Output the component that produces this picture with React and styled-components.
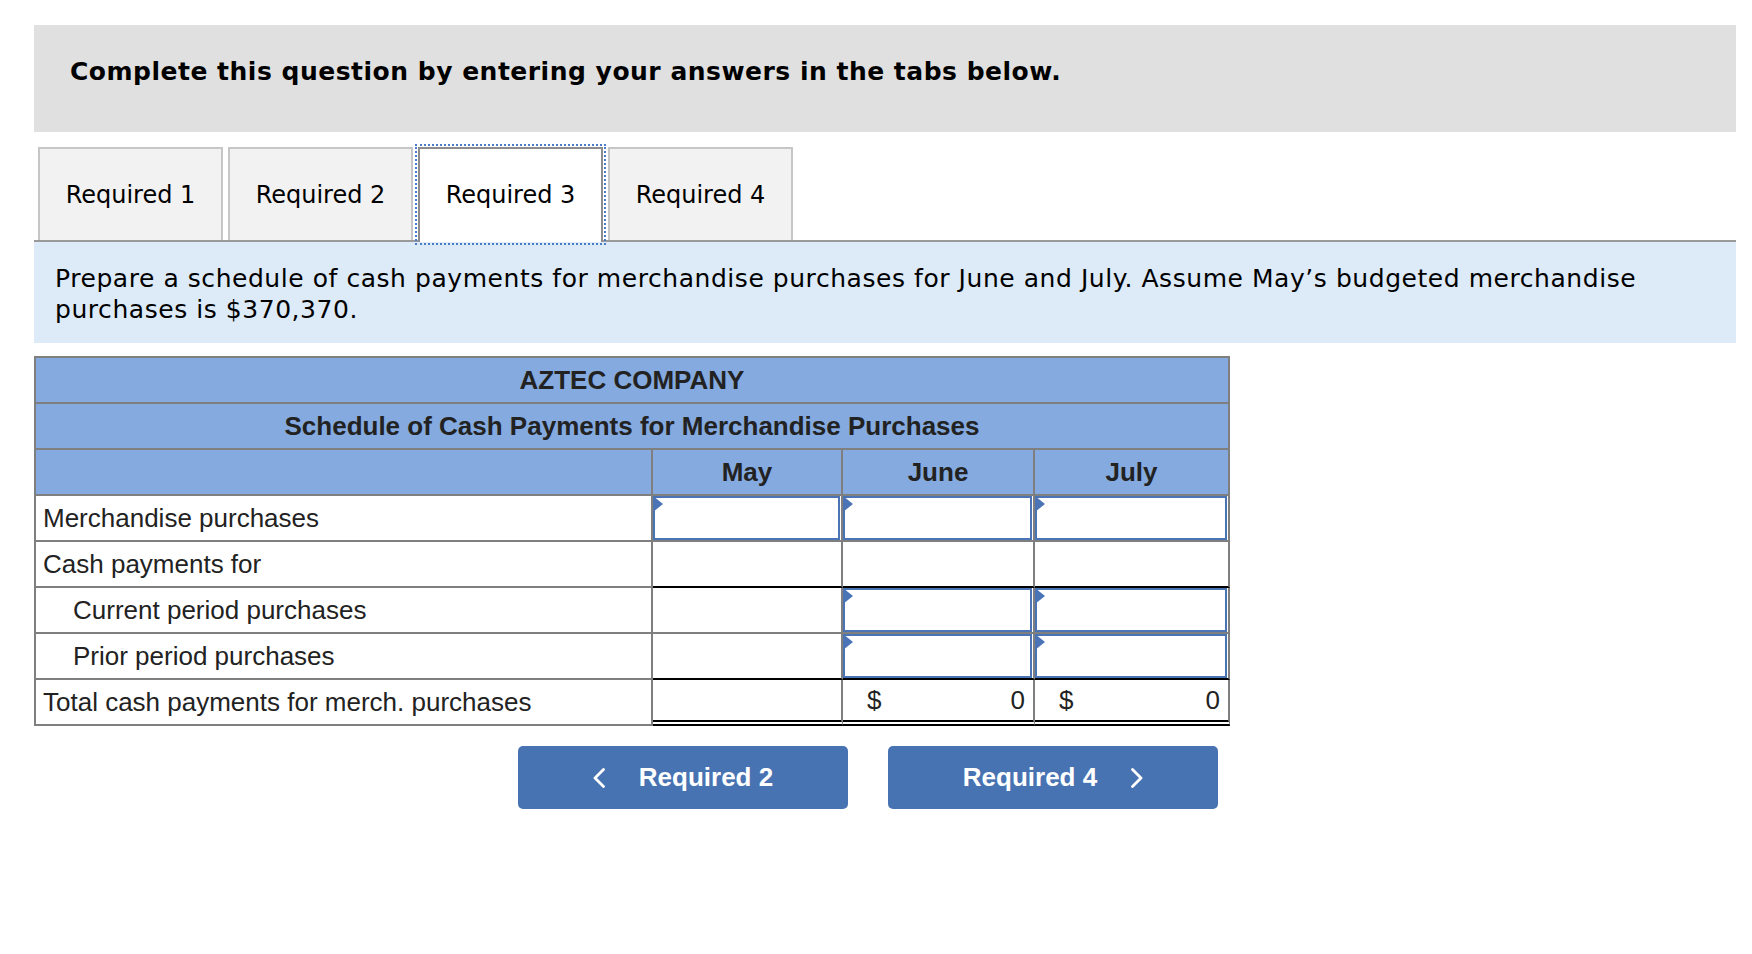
import React from 'react';
import styled, { createGlobalStyle, css } from 'styled-components';

const GlobalStyle = createGlobalStyle`
  html, body { margin: 0; padding: 0; background: #ffffff; }
  body { font-family: "DejaVu Sans", Verdana, sans-serif; color: #000; }
  * { box-sizing: border-box; }
`;

const Page = styled.div`
  width: 1752px;
  padding: 25px 16px 40px 34px;
`;

const Banner = styled.div`
  height: 107px;
  background: #e0e0e0;
  padding: 32px 36px 0;
`;

const BannerTitle = styled.h2`
  margin: 0;
  font-family: "DejaVu Sans", Verdana, sans-serif;
  font-weight: bold;
  font-size: 25px;
  letter-spacing: 0.5px;
  line-height: 29px;
  color: #000;
`;

const TabBar = styled.div`
  display: flex;
  gap: 5px;
  margin-top: 15px;
  padding-left: 4px;
  border-bottom: 2px solid #9a9a9a;
`;

const Tab = styled.div`
  width: 185px;
  height: 93px;
  display: flex;
  align-items: center;
  justify-content: center;
  font-size: 24px;
  color: #000;
  background: #f2f2f2;
  border: 2px solid #c6c6c6;
  border-bottom: none;
  ${(p) =>
    p.$active &&
    css`
      background: #ffffff;
      border-color: #8c8c8c;
      height: 95px;
      margin-bottom: -2px;
      padding-bottom: 2px;
      outline: 2px dotted #4a7cc9;
      outline-offset: 1px;
      position: relative;
      z-index: 1;
    `}
`;

const Prompt = styled.div`
  background: #ddeaf7;
  padding: 21px 21px 18px;
  font-size: 25px;
  letter-spacing: 0.55px;
  line-height: 31px;
  color: #000;
`;

const Sheet = styled.div`
  margin-top: 13px;
  width: 1196px;
  display: grid;
  grid-template-columns: 617px 190px 192px 195px;
  border-left: 2px solid #7f7f7f;
  border-top: 2px solid #7f7f7f;
  font-family: "Liberation Sans", Arial, sans-serif;
  font-size: 26px;
  color: #222;
`;

const Cell = styled.div`
  height: 46px;
  display: flex;
  align-items: center;
  border-right: 2px solid #7f7f7f;
  border-bottom: 2px solid #7f7f7f;
  background: #ffffff;
  padding: 0 0 0 ${(p) => (p.$indent ? 37 : 7)}px;
  ${(p) =>
    p.$head &&
    css`
      background: #84aadf;
      font-weight: bold;
      justify-content: center;
      padding: 0;
    `}
  ${(p) =>
    p.$span &&
    css`
      grid-column: 1 / -1;
    `}
  ${(p) =>
    p.$rule === 'single' &&
    css`
      border-bottom-color: #000;
    `}
  ${(p) =>
    p.$rule === 'double' &&
    css`
      border-bottom: 6px double #000;
    `}
  ${(p) =>
    p.$field &&
    css`
      padding: 0;
      align-items: stretch;
    `}
  ${(p) =>
    p.$money &&
    css`
      justify-content: space-between;
      padding: 0 8px 0 24px;
    `}
`;

const FieldWrap = styled.div`
  position: relative;
  flex: 1;
  margin-right: 1px;
`;

const Field = styled.input`
  display: block;
  width: 100%;
  height: 100%;
  margin: 0;
  border: 2px solid #4a74b6;
  background: #fff;
  font: 26px "Liberation Sans", Arial, sans-serif;
  outline: none;
`;

const Flag = styled.span`
  position: absolute;
  top: 0;
  left: 0;
  width: 0;
  height: 0;
  border-top: 8px solid transparent;
  border-bottom: 8px solid transparent;
  border-left: 10px solid #4a74b6;
  pointer-events: none;
`;

const Nav = styled.div`
  display: flex;
  gap: 40px;
  margin-top: 20px;
  padding-left: 484px;
`;

const NavButton = styled.button`
  width: 330px;
  height: 63px;
  border: none;
  border-radius: 5px;
  background: #4873b3;
  color: #ffffff;
  font-family: "Liberation Sans", Arial, sans-serif;
  font-weight: bold;
  font-size: 26px;
  display: flex;
  align-items: center;
  justify-content: center;
  gap: 34px;
  padding: 0;
  cursor: pointer;
`;

const Chevron = ({ dir }) => (
  <svg width="12" height="20" viewBox="0 0 12 20" aria-hidden="true">
    <polyline
      points={dir === 'left' ? '10.5,1.5 2,10 10.5,18.5' : '1.5,1.5 10,10 1.5,18.5'}
      fill="none"
      stroke="#ffffff"
      strokeWidth="2.8"
      strokeLinecap="round"
      strokeLinejoin="round"
    />
  </svg>
);

const InputCell = ({ rule }) => (
  <Cell $field $rule={rule}>
    <FieldWrap>
      <Field type="text" />
      <Flag />
    </FieldWrap>
  </Cell>
);

export default function App() {
  const tabs = ['Required 1', 'Required 2', 'Required 3', 'Required 4'];
  return (
    <>
      <GlobalStyle />
      <Page>
        <Banner>
          <BannerTitle>Complete this question by entering your answers in the tabs below.</BannerTitle>
        </Banner>
        <TabBar>
          {tabs.map((t, i) => (
            <Tab key={t} $active={i === 2}>
              {t}
            </Tab>
          ))}
        </TabBar>
        <Prompt>
          Prepare a schedule of cash payments for merchandise purchases for June and July. Assume May’s budgeted merchandise purchases is $370,370.
        </Prompt>

        <Sheet>
          <Cell $head $span>AZTEC COMPANY</Cell>
          <Cell $head $span>Schedule of Cash Payments for Merchandise Purchases</Cell>
          <Cell $head />
          <Cell $head>May</Cell>
          <Cell $head>June</Cell>
          <Cell $head>July</Cell>

          <Cell>Merchandise purchases</Cell>
          <InputCell />
          <InputCell />
          <InputCell />

          <Cell>Cash payments for</Cell>
          <Cell $rule="single" />
          <Cell $rule="single" />
          <Cell $rule="single" />

          <Cell $indent>Current period purchases</Cell>
          <Cell />
          <InputCell />
          <InputCell />

          <Cell $indent>Prior period purchases</Cell>
          <Cell $rule="single" />
          <InputCell rule="single" />
          <InputCell rule="single" />

          <Cell>Total cash payments for merch. purchases</Cell>
          <Cell $rule="double" />
          <Cell $money $rule="double">
            <span>$</span>
            <span>0</span>
          </Cell>
          <Cell $money $rule="double">
            <span>$</span>
            <span>0</span>
          </Cell>
        </Sheet>

        <Nav>
          <NavButton type="button">
            <Chevron dir="left" />
            <span>Required 2</span>
          </NavButton>
          <NavButton type="button">
            <span>Required 4</span>
            <Chevron dir="right" />
          </NavButton>
        </Nav>
      </Page>
    </>
  );
}
